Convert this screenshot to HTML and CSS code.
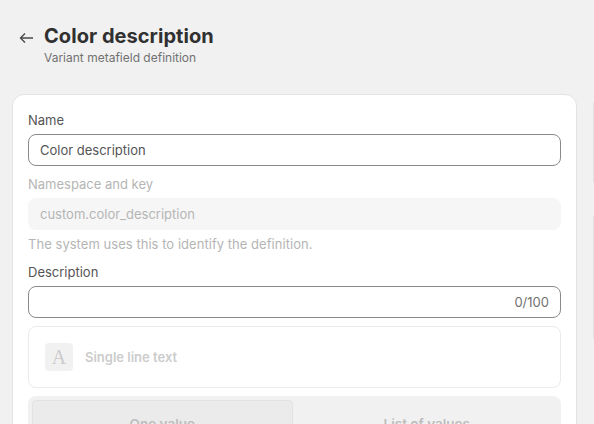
FILE: index.html
```html
<!DOCTYPE html>
<html lang="en">
<head>
    <meta charset="UTF-8">
    <title>Color description</title>
    <link rel="stylesheet" href="styles.css">
</head>
<body>
    <header class="page-header">
        <a href="#" class="back">
            <svg width="20" height="20" viewBox="0 0 20 20"><path d="M9 5.5l-4.5 4.5 4.5 4.5M5 10H17" fill="none" stroke="#4a4a4a" stroke-width="1.4"/></svg>
        </a>
        <div>
            <h1>Color description</h1>
            <p class="subtitle">Variant metafield definition</p>
        </div>
    </header>

    <div class="layout">
        <main class="card">
            <div class="field">
                <label>Name</label>
                <div class="input">Color description</div>
            </div>
            <div class="field disabled">
                <label>Namespace and key</label>
                <div class="input readonly">custom.color_description</div>
                <p class="help">The system uses this to identify the definition.</p>
            </div>
            <div class="field">
                <label>Description</label>
                <div class="input counter">0/100</div>
            </div>
            <div class="type-box">
                <span class="type-icon">A</span>
                <span class="type-name">Single line text</span>
            </div>
            <div class="segmented">
                <div class="segment active">One value</div>
                <div class="segment">List of values</div>
            </div>
        </main>
        <aside class="side">
            <div class="side-card first"></div>
            <div class="side-card second"></div>
        </aside>
    </div>
</body>
</html>
```

FILE: styles.css
```css
html, body {
    height: 100%;
    overflow: hidden;
}
body {
    margin: 0;
    background-color: #f1f1f1;
    font-family: Inter, sans-serif;
    font-size: 13px;
    color: #555555;
}
.page-header {
    display: flex;
    align-items: flex-start;
    gap: 8px;
    padding: 24px 16px 0 16px;
    height: 70px;
}
.back {
    display: block;
    margin-top: 4px;
}
.page-header h1 {
    margin: 0;
    font-size: 20px;
    line-height: 24px;
    font-weight: 700;
    letter-spacing: 0.05px;
    color: #303030;
}
.subtitle {
    margin: 2px 0 0 0;
    font-size: 12px;
    line-height: 16px;
    color: #717171;
}
.layout {
    display: flex;
    gap: 16px;
    padding-left: 12px;
}
.card {
    flex: 0 0 565px;
    box-sizing: border-box;
    height: 400px;
    padding: 15px 15px 0 15px;
    background-color: #fff;
    border: 1px solid #e3e3e3;
    border-radius: 12px;
}
.side {
    flex: 0 0 20px;
    padding-top: 8px;
}
.side-card {
    border-left: 1px solid #e3e3e3;
}
.side-card.first {
    height: 80px;
    margin-bottom: 34px;
}
.side-card.second {
    height: 123px;
}
.field {
    margin-bottom: 8px;
}
.field label {
    display: block;
    line-height: 20px;
    margin-bottom: 4px;
}
.input {
    box-sizing: border-box;
    height: 32px;
    padding: 0 11px;
    line-height: 30px;
    border: 1px solid #8a8a8a;
    border-radius: 8px;
}
.counter {
    text-align: right;
    color: #717171;
}
.disabled label, .help {
    color: #b5b5b5;
}
.readonly {
    background-color: #f6f6f6;
    border-color: #f6f6f6;
    color: #b5b5b5;
}
.help {
    margin: 4px 0 0 0;
    line-height: 20px;
    letter-spacing: 0.04px;
}
.type-box {
    display: flex;
    align-items: center;
    gap: 12px;
    box-sizing: border-box;
    height: 62px;
    padding: 0 16px;
    border: 1px solid #ebebeb;
    border-radius: 8px;
}
.type-icon {
    width: 28px;
    height: 28px;
    border-radius: 4px;
    background-color: #f1f1f1;
    color: #cccccc;
    font-family: "Liberation Serif", serif;
    font-size: 20px;
    line-height: 28px;
    text-align: center;
}
.type-name {
    font-size: 13px;
    font-weight: 600;
    color: #cccccc;
}
.segmented {
    display: flex;
    gap: 4px;
    margin-top: 8px;
    padding: 4px;
    background-color: #f1f1f1;
    border-radius: 8px;
}
.segment {
    flex: 1;
    height: 48px;
    line-height: 46px;
    text-align: center;
    font-size: 13.5px;
    font-weight: 600;
    color: #bdbdbd;
    border: 1px solid transparent;
    border-radius: 4px;
}
.segment.active {
    background-color: #ebebeb;
    border-color: #e3e3e3;
}
```
